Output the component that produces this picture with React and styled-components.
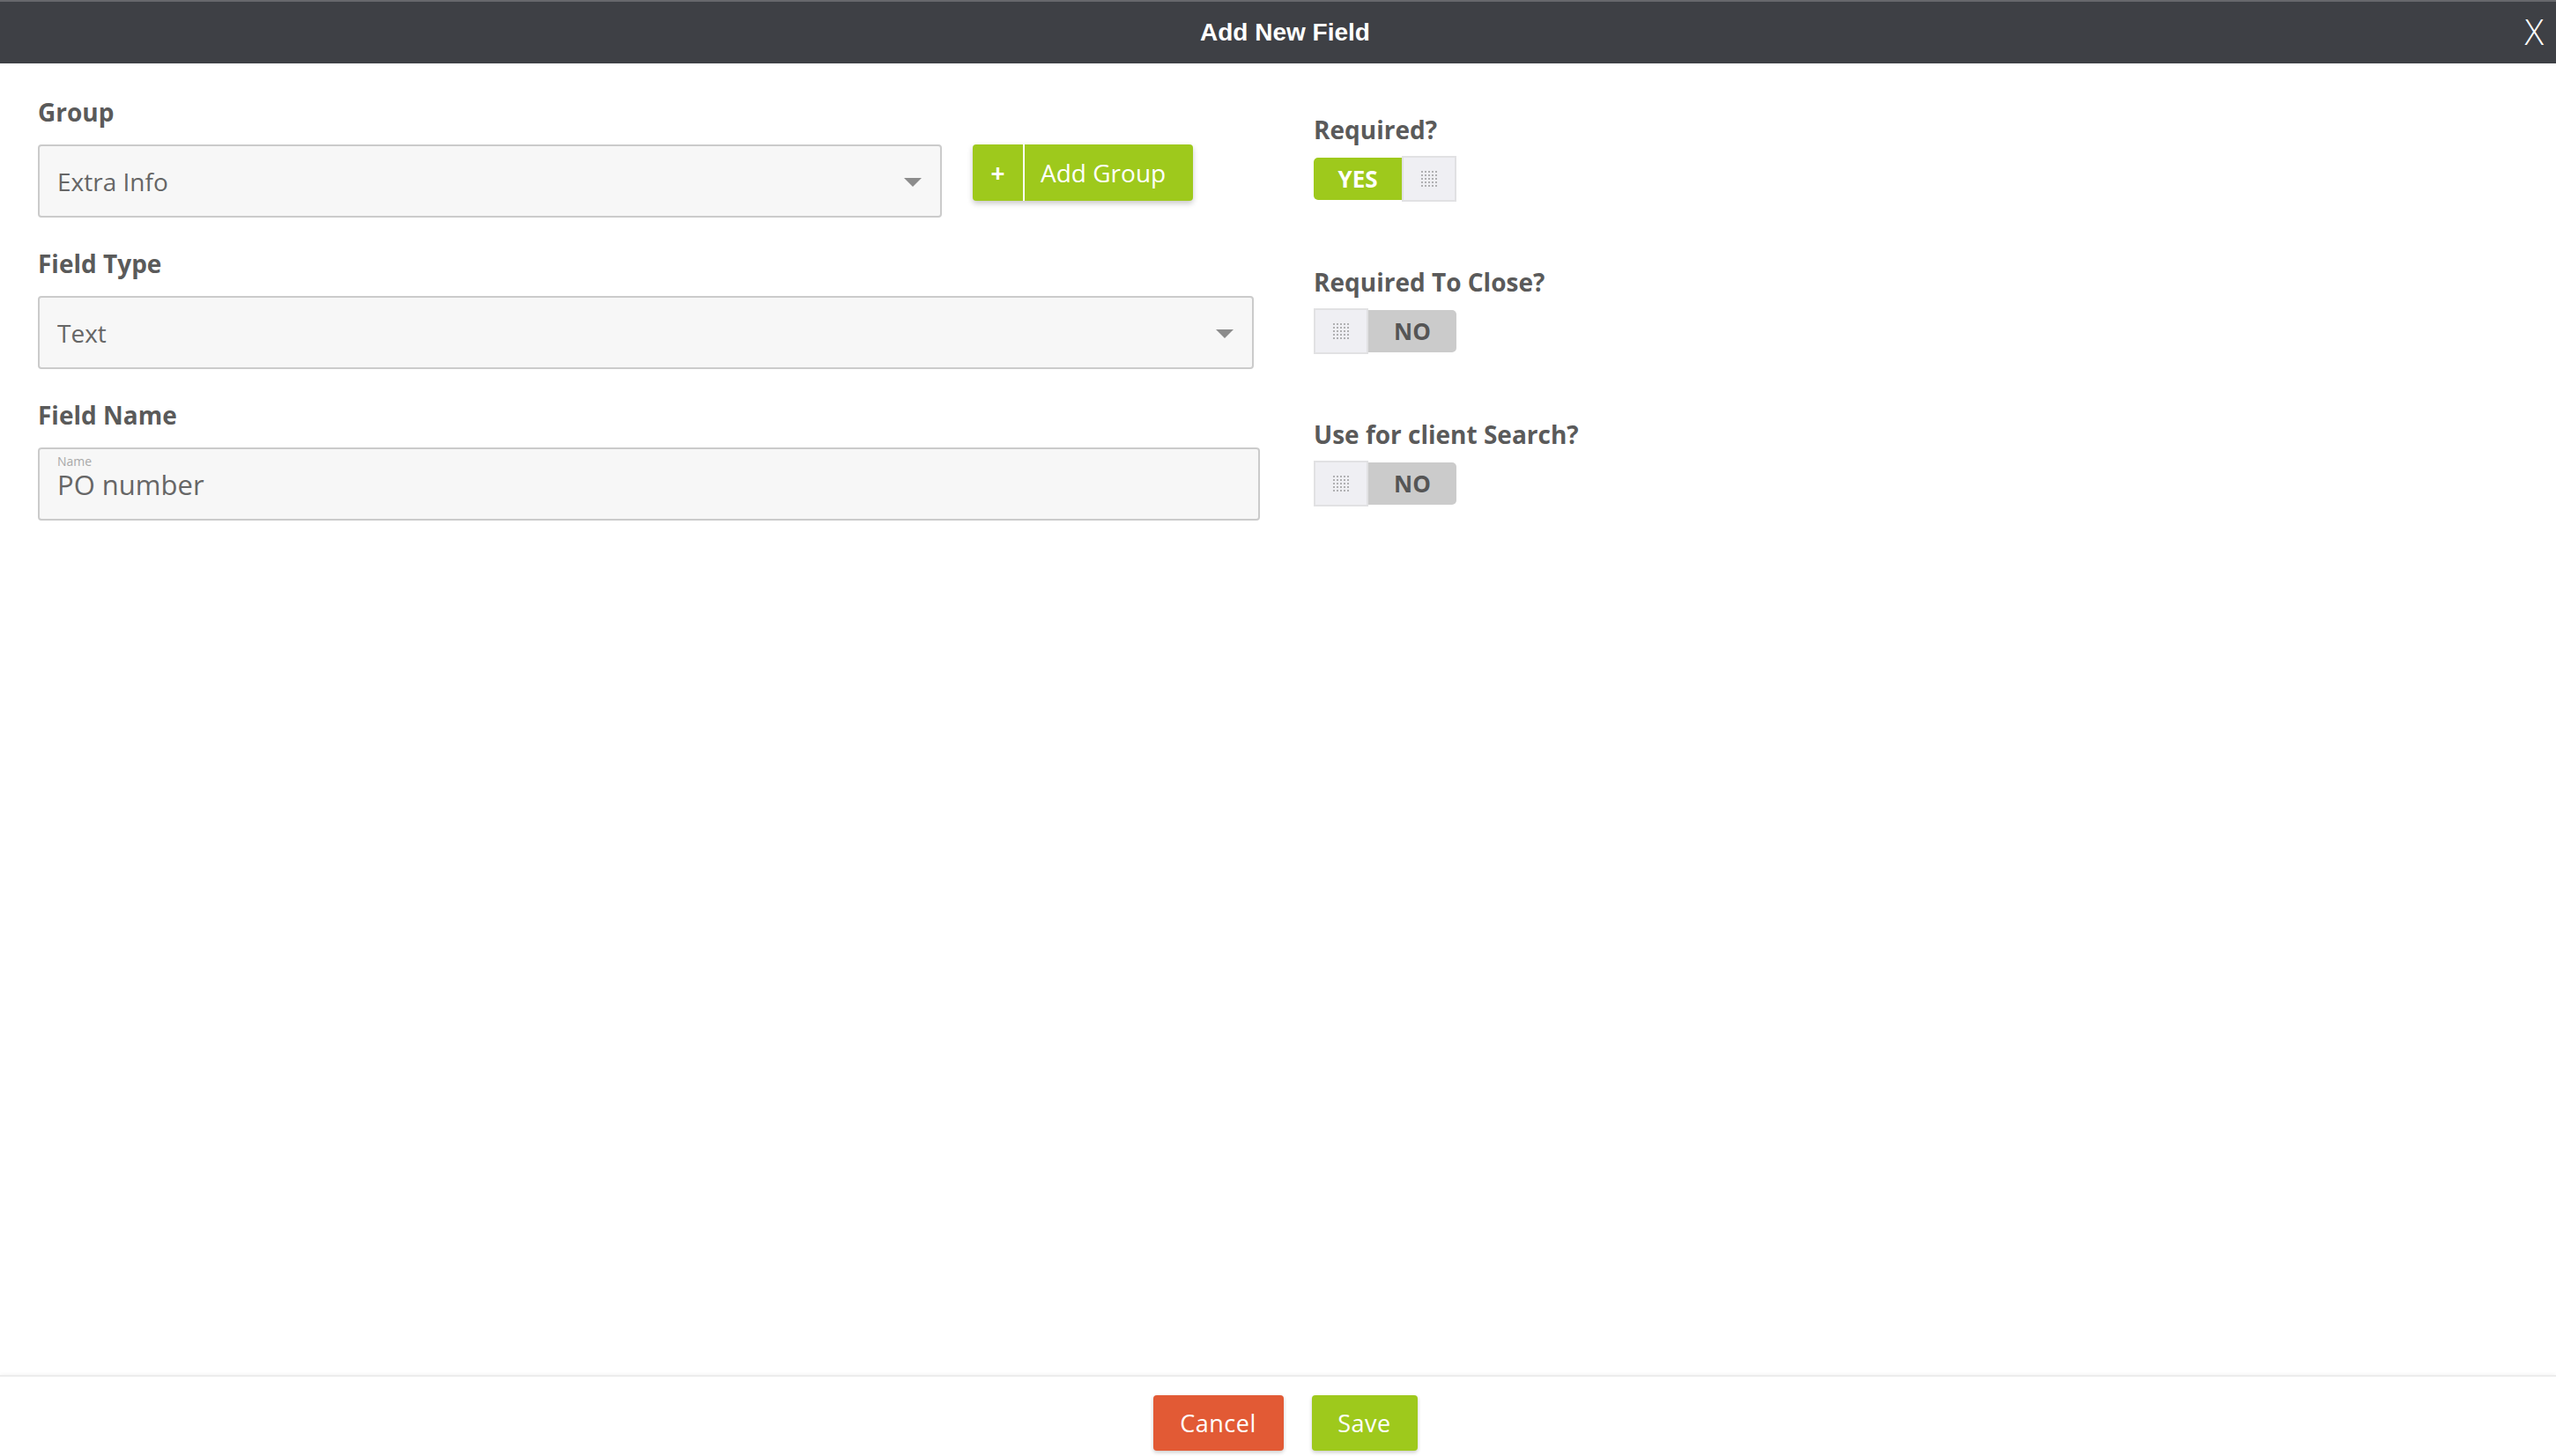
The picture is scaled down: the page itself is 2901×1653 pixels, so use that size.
import React from "react";
import styled, { createGlobalStyle } from "styled-components";

const Global = createGlobalStyle`
  html, body { margin: 0; padding: 0; background: #fff; }
  body { font-family: "Open Sans", "Noto Sans", sans-serif; }
  * { box-sizing: border-box; }
`;

const Page = styled.div`
  display: flex;
  flex-direction: column;
  height: 100vh;
  background: #fff;
`;

const Header = styled.header`
  flex: 0 0 72px;
  display: flex;
  align-items: center;
  justify-content: center;
  position: relative;
  background: #3e4045;
  border-top: 2px solid #67686c;
  padding-left: 16px;
`;

const Title = styled.h1`
  margin: 0;
  font-family: "Liberation Sans", Arial, sans-serif;
  font-weight: 700;
  font-size: 28px;
  color: #fff;
`;

const Close = styled.button`
  position: absolute;
  right: 14px;
  top: 50%;
  transform: translateY(-52%);
  background: none;
  border: 0;
  padding: 0;
  color: #fff;
  font-family: "Open Sans", sans-serif;
  font-weight: 300;
  font-size: 40px;
  line-height: 1;
  cursor: pointer;
`;

const Main = styled.main`
  flex: 1;
  display: flex;
  align-items: flex-start;
  padding: 36px 0 0 43px;
`;

const LeftCol = styled.div`
  width: 1390px;
  display: flex;
  flex-direction: column;
`;

const RightCol = styled.div`
  margin-left: 58px;
  padding-top: 20px;
  display: flex;
  flex-direction: column;
`;

const FieldGroup = styled.div`
  display: flex;
  flex-direction: column;
  margin-bottom: 33px;
`;

const Label = styled.label`
  font-weight: 700;
  font-size: 28px;
  line-height: 38px;
  color: #5a5a5a;
  margin-bottom: 18px;
`;

const Row = styled.div`
  display: flex;
  align-items: flex-start;
`;

const SelectBox = styled.div`
  position: relative;
  width: ${(p) => p.$w}px;
  height: 83px;
  display: flex;
  align-items: center;
  padding-left: 20px;
  background: #f7f7f7;
  border: 2px solid #cbcbcb;
  border-radius: 4px;
  font-size: 28px;
  color: #666;
`;

const Caret = styled.span`
  position: absolute;
  right: 21px;
  top: 50%;
  margin-top: -4px;
  width: 0;
  height: 0;
  border-left: 10px solid transparent;
  border-right: 10px solid transparent;
  border-top: 10px solid #8c8c8c;
`;

const AddButton = styled.button`
  margin-left: 35px;
  height: 64px;
  display: flex;
  align-items: stretch;
  padding: 0;
  border: 0;
  border-radius: 4px;
  background: #9ec91c;
  color: #fff;
  font-family: "Open Sans", sans-serif;
  font-size: 28px;
  box-shadow: 0 3px 6px rgba(0, 0, 0, 0.22);
  cursor: pointer;
`;

const AddIcon = styled.span`
  width: 59px;
  display: flex;
  align-items: center;
  justify-content: center;
  font-weight: 700;
  border-right: 2px solid #fff;
`;

const AddText = styled.span`
  display: flex;
  align-items: center;
  padding: 0 31px 0 18px;
`;

const InputBox = styled.div`
  width: ${(p) => p.$w}px;
  height: 83px;
  display: flex;
  flex-direction: column;
  justify-content: flex-start;
  padding: 6px 0 0 20px;
  background: #f7f7f7;
  border: 2px solid #cbcbcb;
  border-radius: 4px;
`;

const Floating = styled.span`
  font-size: 14px;
  line-height: 16px;
  color: #a9a9a9;
`;

const Value = styled.span`
  font-size: 31px;
  line-height: 36px;
  color: #666;
`;

const ToggleGroup = styled.div`
  display: flex;
  flex-direction: column;
  height: 173px;
`;

const ToggleLabel = styled.div`
  font-weight: 700;
  font-size: 28px;
  line-height: 38px;
  color: #5a5a5a;
  margin-bottom: 11px;
`;

const Switch = styled.div`
  display: flex;
  align-items: center;
  width: 162px;
  height: 52px;
`;

const State = styled.span`
  width: 100px;
  height: 48px;
  display: flex;
  align-items: center;
  justify-content: center;
  font-weight: 700;
  font-size: 26px;
  color: ${(p) => (p.$on ? "#fff" : "#555")};
  background: ${(p) => (p.$on ? "#9ec91c" : "#cbcbcb")};
  border-radius: ${(p) => (p.$on ? "5px 0 0 5px" : "0 5px 5px 0")};
`;

const Handle = styled.span`
  width: 62px;
  height: 52px;
  display: flex;
  align-items: center;
  justify-content: center;
  background: #efeff3;
  border: 2px solid #e1e1e3;
`;

const Grip = () => (
  <svg width="20" height="20" viewBox="0 0 20 20">
    {[0, 1, 2, 3, 4].map((r) =>
      [0, 1, 2, 3, 4].map((c) => (
        <rect key={`${r}-${c}`} x={c * 4 + 1} y={r * 4 + 1} width="2" height="2" fill="#b0b0b2" />
      ))
    )}
  </svg>
);

const Toggle = ({ on }) => (
  <Switch>
    {on ? (
      <>
        <State $on>YES</State>
        <Handle>
          <Grip />
        </Handle>
      </>
    ) : (
      <>
        <Handle>
          <Grip />
        </Handle>
        <State>NO</State>
      </>
    )}
  </Switch>
);

const Footer = styled.footer`
  flex: 0 0 92px;
  display: flex;
  justify-content: center;
  align-items: flex-start;
  gap: 32px;
  padding: 21px 0 0 16px;
  border-top: 2px solid #ececec;
  box-shadow: 0 -2px 4px rgba(0, 0, 0, 0.03);
`;

const FooterButton = styled.button`
  height: 63px;
  width: ${(p) => p.$w}px;
  border: 0;
  border-radius: 4px;
  background: ${(p) => p.$bg};
  color: #fff;
  font-family: "Open Sans", sans-serif;
  font-size: 27px;
  letter-spacing: 0.5px;
  box-shadow: 0 2px 4px rgba(0, 0, 0, 0.2);
  cursor: pointer;
`;

export default function App() {
  return (
    <>
      <Global />
      <Page>
        <Header>
          <Title>Add New Field</Title>
          <Close>X</Close>
        </Header>
        <Main>
          <LeftCol>
            <FieldGroup>
              <Label>Group</Label>
              <Row>
                <SelectBox $w={1026}>
                  Extra Info
                  <Caret />
                </SelectBox>
                <AddButton>
                  <AddIcon>+</AddIcon>
                  <AddText>Add Group</AddText>
                </AddButton>
              </Row>
            </FieldGroup>
            <FieldGroup>
              <Label>Field Type</Label>
              <SelectBox $w={1380}>
                Text
                <Caret />
              </SelectBox>
            </FieldGroup>
            <FieldGroup>
              <Label>Field Name</Label>
              <InputBox $w={1387}>
                <Floating>Name</Floating>
                <Value>PO number</Value>
              </InputBox>
            </FieldGroup>
          </LeftCol>
          <RightCol>
            <ToggleGroup>
              <ToggleLabel>Required?</ToggleLabel>
              <Toggle on />
            </ToggleGroup>
            <ToggleGroup>
              <ToggleLabel>Required To Close?</ToggleLabel>
              <Toggle />
            </ToggleGroup>
            <ToggleGroup>
              <ToggleLabel>Use for client Search?</ToggleLabel>
              <Toggle />
            </ToggleGroup>
          </RightCol>
        </Main>
        <Footer>
          <FooterButton $w={148} $bg="#e25a35">Cancel</FooterButton>
          <FooterButton $w={120} $bg="#9ec91c">Save</FooterButton>
        </Footer>
      </Page>
    </>
  );
}
